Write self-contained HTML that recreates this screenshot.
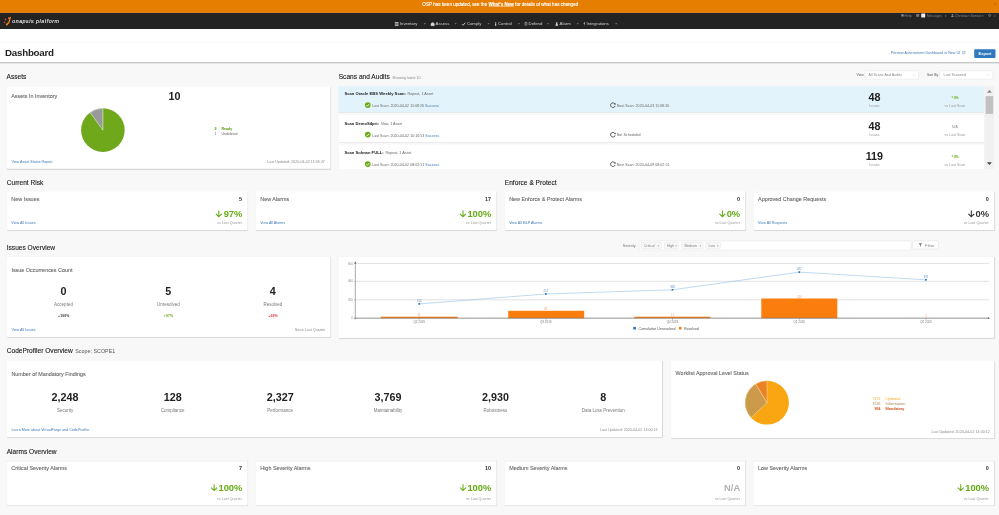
<!DOCTYPE html>
<html lang="en">
<head>
<meta charset="utf-8">
<title>Dashboard</title>
<style>
html,body{margin:0;padding:0;overflow:hidden;}
html{width:999px;height:515px;}
body{width:999px;height:515px;overflow:hidden;background:#f8f8f8;font-family:"Liberation Sans",sans-serif;color:#333;position:relative;}
.a{position:absolute;}
.t{position:absolute;white-space:nowrap;line-height:1;}
.card{position:absolute;background:#fff;box-shadow:0.3px 0.45px 0.9px rgba(0,0,0,.13);border-radius:1px;}
svg{overflow:visible;}
#sc{position:absolute;left:0;top:0;width:9990px;height:5150px;transform:scale(0.1);transform-origin:0 0;}
#zm{position:relative;width:999px;height:515px;zoom:10;will-change:opacity;}
</style>
</head>
<body>
<div id="sc"><div id="zm">
<div class="a" style="left:0px;top:0px;width:999px;height:12.9px;background:rgba(230,126,0,0.996);"></div>
<div class="t" style="left:400.30px;width:200.00px;text-align:center;top:2.24px;font-size:4.56px;color:#fff;-webkit-text-stroke:0.12px #fff;">OSP has been updated, see the <b><u>What's New</u></b> for details of what has changed</div>
<div class="t" style="left:993.6px;top:1.71px;font-size:4.6px;color:#a85c00;">×</div>
<div class="a" style="left:0px;top:12.9px;width:999px;height:16.2px;background:rgba(34,34,34,0.996);"></div>
<svg class="a" style="left:3.2px;top:16.2px;" width="9" height="10" viewBox="0 0 9 10"><circle cx="5.6" cy="2" r="0.9" fill="#f26a21"/><circle cx="2.3" cy="3.2" r="0.8" fill="#e8483a"/><circle cx="1.4" cy="6" r="0.8" fill="#e8483a"/><path d="M7.2 1.2 L5.6 6.4 L3.6 8.2" stroke="#f58220" stroke-width="1.3" fill="none" stroke-linecap="round"/><circle cx="3.6" cy="8.3" r="0.9" fill="#f58220"/></svg>
<div class="t" style="left:12.2px;top:18.21px;font-size:5.3px;color:#e4e4e4;font-style:italic;letter-spacing:0.52px;-webkit-text-stroke:0.12px #e4e4e4;">onapsis platform</div>
<svg class="a" style="left:394.8px;top:22.1px;" width="4.0" height="3.8" viewBox="0 0 4.4 4.2"><path d="M0 0.3H4.2V1.3H0Z M0 1.9H4.2V2.6H0Z M0 3.2H4.2V3.9H0Z" fill="#d8dae0"/></svg>
<div class="t" style="left:399.9px;top:21.59px;font-size:4.27px;color:#cdd0d8;">Inventory</div>
<svg class="a" style="left:423.8px;top:23.3px;" width="2" height="1.4" viewBox="0 0 2 1.4"><path d="M0 0H2L1 1.3Z" fill="#8b8e96"/></svg>
<svg class="a" style="left:430.8px;top:22.1px;" width="4.0" height="3.8" viewBox="0 0 4.4 4.2"><path d="M0.2 1.5H3.8V3.9H0.2Z M1.2 1.5V0.6H2.8V1.5" fill="#d8dae0" stroke="#d8dae0" stroke-width="0.5"/></svg>
<div class="t" style="left:435.6px;top:21.59px;font-size:4.27px;color:#cdd0d8;">Assess</div>
<svg class="a" style="left:454.6px;top:23.3px;" width="2" height="1.4" viewBox="0 0 2 1.4"><path d="M0 0H2L1 1.3Z" fill="#8b8e96"/></svg>
<svg class="a" style="left:461.8px;top:22.1px;" width="4.0" height="3.8" viewBox="0 0 4.4 4.2"><path d="M0.3 2.3L1.5 3.5L3.8 0.7" stroke="#d8dae0" stroke-width="0.9" fill="none"/></svg>
<div class="t" style="left:466.9px;top:21.59px;font-size:4.27px;color:#cdd0d8;">Comply</div>
<svg class="a" style="left:487.5px;top:23.3px;" width="2" height="1.4" viewBox="0 0 2 1.4"><path d="M0 0H2L1 1.3Z" fill="#8b8e96"/></svg>
<svg class="a" style="left:494.5px;top:22.1px;" width="4.0" height="3.8" viewBox="0 0 4.4 4.2"><path d="M0.6 3.9V2.6Q0.6 1.7 1.25 1.7Q1.9 1.7 1.9 2.6V3.9Z" fill="#d8dae0"/><circle cx="1.25" cy="1" r="0.7" fill="#d8dae0"/></svg>
<div class="t" style="left:498px;top:21.59px;font-size:4.27px;color:#cdd0d8;">Control</div>
<svg class="a" style="left:517.9px;top:23.3px;" width="2" height="1.4" viewBox="0 0 2 1.4"><path d="M0 0H2L1 1.3Z" fill="#8b8e96"/></svg>
<svg class="a" style="left:524.7px;top:22.1px;" width="4.0" height="3.8" viewBox="0 0 4.4 4.2"><path d="M0.3 0.3H2.3V2.6Q2.3 3.5 1.3 3.9Q0.3 3.5 0.3 2.6Z" fill="none" stroke="#d8dae0" stroke-width="0.6"/></svg>
<div class="t" style="left:528.6px;top:21.59px;font-size:4.27px;color:#cdd0d8;">Defend</div>
<svg class="a" style="left:547.1px;top:23.3px;" width="2" height="1.4" viewBox="0 0 2 1.4"><path d="M0 0H2L1 1.3Z" fill="#8b8e96"/></svg>
<svg class="a" style="left:555.3px;top:22.1px;" width="4.0" height="3.8" viewBox="0 0 4.4 4.2"><path d="M0.2 3.9V3.1Q0.2 2.1 1.6 2.1Q3 2.1 3 3.1V3.9Z" fill="#d8dae0"/><circle cx="1.6" cy="1.1" r="0.95" fill="#d8dae0"/></svg>
<div class="t" style="left:559.6px;top:21.59px;font-size:4.27px;color:#cdd0d8;">Alarm</div>
<svg class="a" style="left:576.7px;top:23.3px;" width="2" height="1.4" viewBox="0 0 2 1.4"><path d="M0 0H2L1 1.3Z" fill="#8b8e96"/></svg>
<svg class="a" style="left:583.3px;top:22.1px;" width="4.0" height="3.8" viewBox="0 0 4.4 4.2"><path d="M0.9 0.2L0.3 2.2H1.1L0.6 3.9L2 1.6H1.2L1.7 0.2Z" fill="#d8dae0"/></svg>
<div class="t" style="left:586.5px;top:21.59px;font-size:4.27px;color:#cdd0d8;">Integrations</div>
<svg class="a" style="left:615.2px;top:23.3px;" width="2" height="1.4" viewBox="0 0 2 1.4"><path d="M0 0H2L1 1.3Z" fill="#8b8e96"/></svg>
<svg class="a" style="left:901px;top:13.9px;" width="3" height="3" viewBox="0 0 3 3"><circle cx="1.5" cy="1.5" r="1.3" fill="#7f8492"/></svg>
<div class="t" style="left:904.6px;top:13.74px;font-size:3.5px;color:#7f8492;">Help</div>
<div class="a" style="left:916.2px;top:14px;width:3px;height:2.8px;background:rgba(119,119,119,0.996);"></div>
<div class="a" style="left:921.2px;top:13.4px;width:4px;height:4px;background:rgba(238,238,238,0.996);border-radius:0.6px;"></div>
<div class="t" style="left:927px;top:13.91px;font-size:3.3px;color:#7f8492;">Messages</div>
<div class="t" style="left:944.6px;top:14.50px;font-size:2.6px;color:#7f8492;">▾</div>
<svg class="a" style="left:951px;top:13.8px;" width="3" height="3.2" viewBox="0 0 3 3.2"><circle cx="1.5" cy="0.9" r="0.8" fill="#7f8492"/><path d="M0.2 3.2V2.6Q0.2 1.8 1.5 1.8Q2.8 1.8 2.8 2.6V3.2Z" fill="#7f8492"/></svg>
<div class="t" style="left:954.8px;top:13.55px;font-size:3.72px;color:#7f8492;">Christian Senior</div>
<div class="t" style="left:982.4px;top:14.50px;font-size:2.6px;color:#7f8492;">▾</div>
<svg class="a" style="left:988.2px;top:13.9px;" width="3" height="3" viewBox="0 0 3 3"><circle cx="1.5" cy="1.5" r="1" fill="none" stroke="#7f8492" stroke-width="0.8"/></svg>
<div class="t" style="left:993.6px;top:14.50px;font-size:2.6px;color:#7f8492;">▾</div>
<div class="a" style="left:0px;top:29.1px;width:999px;height:33.2px;background:rgba(255,255,255,0.996);"></div>
<div class="a" style="left:0px;top:42.6px;width:999px;height:0.5px;background:rgba(244,244,244,0.996);"></div>
<div class="a" style="left:0px;top:62.2px;width:999px;height:1.1px;background:rgba(188,188,188,0.996);"></div>
<div class="t" style="left:5px;top:47.60px;font-size:9.8px;color:#222;font-weight:bold;letter-spacing:-0.27px;">Dashboard</div>
<div class="t" style="right:38.90px;top:50.91px;font-size:3.65px;color:#3d7ab8;">Preview Assessment Dashboard in New UI</div>
<svg class="a" style="left:962.2px;top:51.1px;" width="3.2" height="3.2" viewBox="0 0 3.2 3.2"><path d="M1.4 0.6H0.4V2.8H2.6V1.8 M1.8 0.3H2.9V1.4 M2.9 0.3L1.5 1.7" stroke="#3d7ab8" stroke-width="0.4" fill="none"/></svg>
<div class="a" style="left:974.2px;top:49.2px;width:21.3px;height:8.9px;background:rgba(47,120,189,0.996);border-radius:1px;"></div>
<div class="t" style="left:971.30px;width:27.20px;text-align:center;top:51.67px;font-size:4.05px;color:#fff;font-weight:bold;">Export</div>
<div class="t" style="left:6.6px;top:73.11px;font-size:6.6px;color:#222;-webkit-text-stroke:0.12px #222;">Assets</div>
<div class="card" style="left:7.1px;top:86.6px;width:323.2px;height:82px;background:rgba(255,255,255,0.996);"></div>
<div class="t" style="left:11.2px;top:93.11px;font-size:5.42px;color:#626262;-webkit-text-stroke:0.08px #626262;">Assets In Inventory</div>
<div class="t" style="left:74.40px;width:200.00px;text-align:center;top:90.56px;font-size:10.8px;color:#222;font-weight:bold;">10</div>
<svg class="a" style="left:80.85px;top:108.1px;" width="44" height="44" viewBox="-22 -22 44 44"><circle r="21.8" fill="#70a81c"/><path d="M0 0 L0 -21.8 A21.8 21.8 0 0 0 -12.81 -17.64 Z" fill="#999" stroke="#fff" stroke-width="0.5" stroke-linejoin="round"/></svg>
<div class="t" style="left:214.4px;top:126.75px;font-size:3.6px;color:#5e9a12;font-weight:bold;">9</div>
<div class="t" style="left:221.5px;top:126.75px;font-size:3.6px;color:#5e9a12;font-weight:bold;">Ready</div>
<div class="t" style="left:214.4px;top:131.64px;font-size:3.5px;color:#666;">1</div>
<div class="t" style="left:221.5px;top:131.64px;font-size:3.5px;color:#666;">Undefined</div>
<div class="t" style="left:11.4px;top:160.01px;font-size:3.65px;color:#3d7ab8;">View Asset Status Report</div>
<div class="t" style="right:674.30px;top:160.31px;font-size:3.65px;color:#8c8c8c;">Last Updated: 2020-04-02 11:58:47</div>
<div class="t" style="left:338.7px;top:73.21px;font-size:6.6px;color:#222;-webkit-text-stroke:0.12px #222;">Scans and Audits</div>
<div class="t" style="left:392.2px;top:75.75px;font-size:3.6px;color:#8c8c8c;">Showing latest 10</div>
<div class="t" style="left:856.5px;top:73.12px;font-size:3.4px;color:#555;">View</div>
<div class="a" style="left:864.7px;top:70.5px;width:54.2px;height:8.9px;background:rgba(255,255,255,0.996);border:0.5px solid #e0e0e0;border-radius:1.2px;box-sizing:border-box;"></div>
<div class="t" style="left:868.4px;top:72.91px;font-size:3.65px;color:#8a8a8a;">All Scans And Audits</div>
<svg class="a" style="left:912.5px;top:74.2px;" width="2.4" height="1.6" viewBox="0 0 2.4 1.6"><path d="M0.2 0.2L1.2 1.3L2.2 0.2" stroke="#bbb" stroke-width="0.4" fill="none"/></svg>
<div class="t" style="left:927px;top:73.12px;font-size:3.4px;color:#555;">Sort By</div>
<div class="a" style="left:939.4px;top:70.5px;width:53.8px;height:8.9px;background:rgba(255,255,255,0.996);border:0.5px solid #e0e0e0;border-radius:1.2px;box-sizing:border-box;"></div>
<div class="t" style="left:943.6px;top:72.91px;font-size:3.65px;color:#8a8a8a;">Last Scanned</div>
<svg class="a" style="left:987.2px;top:74.2px;" width="2.4" height="1.6" viewBox="0 0 2.4 1.6"><path d="M0.2 0.2L1.2 1.3L2.2 0.2" stroke="#bbb" stroke-width="0.4" fill="none"/></svg>
<div class="a" style="left:338.7px;top:86.3px;width:645.2px;height:26.0px;background:rgba(226,243,252,0.996);box-shadow:0.2px 0.4px 0.8px rgba(0,0,0,.10);"></div>
<div class="a" style="left:338.7px;top:114.9px;width:645.2px;height:27.1px;background:rgba(255,255,255,0.996);box-shadow:0.2px 0.4px 0.8px rgba(0,0,0,.10);"></div>
<div class="a" style="left:338.7px;top:144.7px;width:645.2px;height:24.4px;background:rgba(255,255,255,0.996);box-shadow:0.2px 0.4px 0.8px rgba(0,0,0,.10);"></div>
<div class="a" style="left:336px;top:168.9px;width:660px;height:4px;background:rgba(248,248,248,0.996);"></div>
<div class="t" style="left:344.4px;top:91.79px;font-size:4.15px;color:#222;font-weight:bold;">Scan Oracle EBS Weekly Scan:</div>
<div class="t" style="left:407.59999999999997px;top:92.21px;font-size:3.65px;color:#666;">Repeat, 1 Asset</div>
<svg class="a" style="left:364.8px;top:102.10px;" width="6" height="6" viewBox="0 0 6 6"><circle cx="3" cy="3" r="2.85" fill="#6aaa16"/><path d="M1.6 3.1L2.6 4.1L4.4 2.1" stroke="#fff" stroke-width="0.9" fill="none"/></svg>
<div class="t" style="left:372.2px;top:104.01px;font-size:3.65px;color:#666;">Last Scan: 2020-04-02 11:08:26 <span style="color:#3d7ab8;">Success</span></div>
<svg class="a" style="left:609.9px;top:102.20px;" width="6" height="6" viewBox="0 0 6 6"><path d="M5.05 1.9A2.3 2.3 0 1 0 5.2 3.7" stroke="#4a4e52" stroke-width="1.0" fill="none"/><path d="M5.9 0.9L5.7 2.6L4.0 2.3Z" fill="#4a4e52"/></svg>
<div class="t" style="left:616.7px;top:103.81px;font-size:3.65px;color:#666;">Next Scan: 2020-04-03 11:08:20</div>
<div class="t" style="left:774.40px;width:200.00px;text-align:center;top:91.66px;font-size:10.8px;color:#222;font-weight:bold;">48</div>
<div class="t" style="left:774.40px;width:200.00px;text-align:center;top:103.65px;font-size:3.6px;color:#999;">Issues</div>
<div class="t" style="left:911.30px;width:87.20px;text-align:center;top:95.74px;font-size:3.5px;color:#64ab14;font-weight:bold;"><span style="font-size:2.6px;vertical-align:0.3px;">▼</span>0%</div>
<div class="t" style="left:911.30px;width:87.20px;text-align:center;top:103.61px;font-size:3.65px;color:#999;">vs Last Scan</div>
<div class="t" style="left:344.4px;top:121.29px;font-size:4.15px;color:#222;font-weight:bold;">Scan DemoS4prt:</div>
<div class="t" style="left:381.1px;top:121.71px;font-size:3.65px;color:#666;">Now, 1 Asset</div>
<svg class="a" style="left:364.8px;top:131.60px;" width="6" height="6" viewBox="0 0 6 6"><circle cx="3" cy="3" r="2.85" fill="#6aaa16"/><path d="M1.6 3.1L2.6 4.1L4.4 2.1" stroke="#fff" stroke-width="0.9" fill="none"/></svg>
<div class="t" style="left:372.2px;top:133.51px;font-size:3.65px;color:#666;">Last Scan: 2020-04-02 10:16:53 <span style="color:#3d7ab8;">Success</span></div>
<svg class="a" style="left:609.9px;top:131.70px;" width="6" height="6" viewBox="0 0 6 6"><path d="M5.05 1.9A2.3 2.3 0 1 0 5.2 3.7" stroke="#4a4e52" stroke-width="1.0" fill="none"/><path d="M5.9 0.9L5.7 2.6L4.0 2.3Z" fill="#4a4e52"/></svg>
<div class="t" style="left:616.7px;top:133.31px;font-size:3.65px;color:#666;">Not Scheduled</div>
<div class="t" style="left:774.40px;width:200.00px;text-align:center;top:121.16px;font-size:10.8px;color:#222;font-weight:bold;">48</div>
<div class="t" style="left:774.40px;width:200.00px;text-align:center;top:133.15px;font-size:3.6px;color:#999;">Issues</div>
<div class="t" style="left:911.30px;width:87.20px;text-align:center;top:125.24px;font-size:3.5px;color:#888;">N/A</div>
<div class="t" style="left:911.30px;width:87.20px;text-align:center;top:133.11px;font-size:3.65px;color:#999;">vs Last Scan</div>
<div class="t" style="left:344.4px;top:150.79px;font-size:4.15px;color:#222;font-weight:bold;">Scan Solman FULL:</div>
<div class="t" style="left:385.5px;top:151.21px;font-size:3.65px;color:#666;">Repeat, 1 Asset</div>
<svg class="a" style="left:364.8px;top:161.10px;" width="6" height="6" viewBox="0 0 6 6"><circle cx="3" cy="3" r="2.85" fill="#6aaa16"/><path d="M1.6 3.1L2.6 4.1L4.4 2.1" stroke="#fff" stroke-width="0.9" fill="none"/></svg>
<div class="t" style="left:372.2px;top:163.01px;font-size:3.65px;color:#666;">Last Scan: 2020-04-02 08:02:51 <span style="color:#3d7ab8;">Success</span></div>
<svg class="a" style="left:609.9px;top:161.20px;" width="6" height="6" viewBox="0 0 6 6"><path d="M5.05 1.9A2.3 2.3 0 1 0 5.2 3.7" stroke="#4a4e52" stroke-width="1.0" fill="none"/><path d="M5.9 0.9L5.7 2.6L4.0 2.3Z" fill="#4a4e52"/></svg>
<div class="t" style="left:616.7px;top:162.81px;font-size:3.65px;color:#666;">Next Scan: 2020-04-09 08:02:51</div>
<div class="t" style="left:774.40px;width:200.00px;text-align:center;top:150.66px;font-size:10.8px;color:#222;font-weight:bold;">119</div>
<div class="t" style="left:774.40px;width:200.00px;text-align:center;top:162.65px;font-size:3.6px;color:#999;">Issues</div>
<div class="t" style="left:911.30px;width:87.20px;text-align:center;top:154.74px;font-size:3.5px;color:#64ab14;font-weight:bold;"><span style="font-size:2.6px;vertical-align:0.3px;">▼</span>0%</div>
<div class="t" style="left:911.30px;width:87.20px;text-align:center;top:162.61px;font-size:3.65px;color:#999;">vs Last Scan</div>
<div class="a" style="left:984.6px;top:86.3px;width:9.4px;height:82.6px;background:rgba(241,241,241,0.996);"></div>
<div class="a" style="left:985.6px;top:96.1px;width:7.6px;height:17.8px;background:rgba(193,193,193,0.996);"></div>
<svg class="a" style="left:986.9px;top:89.8px;" width="5" height="3" viewBox="0 0 5 3"><path d="M0 3L2.5 0.2L5 3Z" fill="#888"/></svg>
<svg class="a" style="left:986.9px;top:162.2px;" width="5" height="3" viewBox="0 0 5 3"><path d="M0 0L2.5 2.8L5 0Z" fill="#444"/></svg>
<div class="t" style="left:6.7px;top:179.16px;font-size:6.6px;color:#222;-webkit-text-stroke:0.12px #222;">Current Risk</div>
<div class="t" style="left:504.8px;top:179.16px;font-size:6.6px;color:#222;-webkit-text-stroke:0.12px #222;">Enforce &amp; Protect</div>
<div class="card" style="left:7.15px;top:191.6px;width:240.2px;height:38.3px;background:rgba(255,255,255,0.996);"></div>
<div class="t" style="left:11.350000000000001px;top:196.71px;font-size:5.42px;color:#626262;-webkit-text-stroke:0.08px #626262;">New Issues</div>
<div class="t" style="right:756.85px;top:196.68px;font-size:5.46px;color:#333;font-weight:bold;">5</div>
<div class="t" style="right:756.65px;top:208.94px;font-size:9.4px;color:#64ab14;font-weight:bold;letter-spacing:-0.05px;">97%</div>
<svg class="a" style="left:215.35px;top:210.30px;" width="6.8" height="6.9" viewBox="0 0 6.8 6.9"><path d="M3.4 0.1V6.2 M0.45 3.5L3.4 6.4L6.35 3.5" stroke="#64ab14" stroke-width="1.05" fill="none"/></svg>
<div class="t" style="right:756.95px;top:220.71px;font-size:3.65px;color:#999;">vs Last Quarter</div>
<div class="t" style="left:11.350000000000001px;top:220.71px;font-size:3.65px;color:#3d7ab8;">View All Issues</div>
<div class="card" style="left:256.05px;top:191.6px;width:240.2px;height:38.3px;background:rgba(255,255,255,0.996);"></div>
<div class="t" style="left:260.25px;top:196.71px;font-size:5.42px;color:#626262;-webkit-text-stroke:0.08px #626262;">New Alarms</div>
<div class="t" style="right:507.95px;top:196.68px;font-size:5.46px;color:#333;font-weight:bold;">17</div>
<div class="t" style="right:507.75px;top:208.94px;font-size:9.4px;color:#64ab14;font-weight:bold;letter-spacing:-0.05px;">100%</div>
<svg class="a" style="left:459.55px;top:210.30px;" width="6.8" height="6.9" viewBox="0 0 6.8 6.9"><path d="M3.4 0.1V6.2 M0.45 3.5L3.4 6.4L6.35 3.5" stroke="#64ab14" stroke-width="1.05" fill="none"/></svg>
<div class="t" style="right:508.05px;top:220.71px;font-size:3.65px;color:#999;">vs Last Quarter</div>
<div class="t" style="left:260.25px;top:220.71px;font-size:3.65px;color:#3d7ab8;">View All Alarms</div>
<div class="card" style="left:504.95px;top:191.6px;width:240.2px;height:38.3px;background:rgba(255,255,255,0.996);"></div>
<div class="t" style="left:509.15px;top:196.71px;font-size:5.42px;color:#626262;-webkit-text-stroke:0.08px #626262;">New Enforce &amp; Protect Alarms</div>
<div class="t" style="right:259.05px;top:196.68px;font-size:5.46px;color:#333;font-weight:bold;">0</div>
<div class="t" style="right:258.85px;top:208.94px;font-size:9.4px;color:#64ab14;font-weight:bold;letter-spacing:-0.05px;">0%</div>
<svg class="a" style="left:718.95px;top:210.30px;" width="6.8" height="6.9" viewBox="0 0 6.8 6.9"><path d="M3.4 0.1V6.2 M0.45 3.5L3.4 6.4L6.35 3.5" stroke="#64ab14" stroke-width="1.05" fill="none"/></svg>
<div class="t" style="right:259.15px;top:220.71px;font-size:3.65px;color:#999;">vs Last Quarter</div>
<div class="t" style="left:509.15px;top:220.71px;font-size:3.65px;color:#3d7ab8;">View All E&amp;P Alarms</div>
<div class="card" style="left:753.85px;top:191.6px;width:240.2px;height:38.3px;background:rgba(255,255,255,0.996);"></div>
<div class="t" style="left:758.0500000000001px;top:196.71px;font-size:5.42px;color:#626262;-webkit-text-stroke:0.08px #626262;">Approved Change Requests</div>
<div class="t" style="right:10.15px;top:196.68px;font-size:5.46px;color:#333;font-weight:bold;">0</div>
<div class="t" style="right:9.95px;top:208.94px;font-size:9.4px;color:#333;font-weight:bold;letter-spacing:-0.05px;">0%</div>
<svg class="a" style="left:967.85px;top:210.30px;" width="6.8" height="6.9" viewBox="0 0 6.8 6.9"><path d="M3.4 0.1V6.2 M0.45 3.5L3.4 6.4L6.35 3.5" stroke="#333" stroke-width="1.05" fill="none"/></svg>
<div class="t" style="right:10.25px;top:220.71px;font-size:3.65px;color:#999;">vs Last Quarter</div>
<div class="t" style="left:758.0500000000001px;top:220.71px;font-size:3.65px;color:#3d7ab8;">View All Requests</div>
<div class="t" style="left:6.7px;top:448.21px;font-size:6.6px;color:#222;-webkit-text-stroke:0.12px #222;">Alarms Overview</div>
<div class="card" style="left:7.15px;top:461.5px;width:240.2px;height:43.7px;background:rgba(255,255,255,0.996);"></div>
<div class="t" style="left:11.350000000000001px;top:465.71px;font-size:5.42px;color:#626262;-webkit-text-stroke:0.08px #626262;">Critical Severity Alarms</div>
<div class="t" style="right:756.85px;top:465.68px;font-size:5.46px;color:#333;font-weight:bold;">7</div>
<div class="t" style="right:756.65px;top:482.84px;font-size:9.4px;color:#64ab14;font-weight:bold;letter-spacing:-0.05px;">100%</div>
<svg class="a" style="left:210.65px;top:484.20px;" width="6.8" height="6.9" viewBox="0 0 6.8 6.9"><path d="M3.4 0.1V6.2 M0.45 3.5L3.4 6.4L6.35 3.5" stroke="#64ab14" stroke-width="1.05" fill="none"/></svg>
<div class="t" style="right:756.95px;top:496.61px;font-size:3.65px;color:#999;">vs Last Quarter</div>
<div class="card" style="left:256.05px;top:461.5px;width:240.2px;height:43.7px;background:rgba(255,255,255,0.996);"></div>
<div class="t" style="left:260.25px;top:465.71px;font-size:5.42px;color:#626262;-webkit-text-stroke:0.08px #626262;">High Severity Alarms</div>
<div class="t" style="right:507.95px;top:465.68px;font-size:5.46px;color:#333;font-weight:bold;">10</div>
<div class="t" style="right:507.75px;top:482.84px;font-size:9.4px;color:#64ab14;font-weight:bold;letter-spacing:-0.05px;">100%</div>
<svg class="a" style="left:459.55px;top:484.20px;" width="6.8" height="6.9" viewBox="0 0 6.8 6.9"><path d="M3.4 0.1V6.2 M0.45 3.5L3.4 6.4L6.35 3.5" stroke="#64ab14" stroke-width="1.05" fill="none"/></svg>
<div class="t" style="right:508.05px;top:496.61px;font-size:3.65px;color:#999;">vs Last Quarter</div>
<div class="card" style="left:504.95px;top:461.5px;width:240.2px;height:43.7px;background:rgba(255,255,255,0.996);"></div>
<div class="t" style="left:509.15px;top:465.71px;font-size:5.42px;color:#626262;-webkit-text-stroke:0.08px #626262;">Medium Severity Alarms</div>
<div class="t" style="right:259.05px;top:465.68px;font-size:5.46px;color:#333;font-weight:bold;">0</div>
<div class="t" style="right:258.85px;top:482.84px;font-size:9.4px;color:#b0b0b0;font-weight:bold;letter-spacing:-0.05px;">N/A</div>
<div class="t" style="right:259.15px;top:496.61px;font-size:3.65px;color:#999;">vs Last Quarter</div>
<div class="card" style="left:753.85px;top:461.5px;width:240.2px;height:43.7px;background:rgba(255,255,255,0.996);"></div>
<div class="t" style="left:758.0500000000001px;top:465.71px;font-size:5.42px;color:#626262;-webkit-text-stroke:0.08px #626262;">Low Severity Alarms</div>
<div class="t" style="right:10.15px;top:465.68px;font-size:5.46px;color:#333;font-weight:bold;">0</div>
<div class="t" style="right:9.95px;top:482.84px;font-size:9.4px;color:#64ab14;font-weight:bold;letter-spacing:-0.05px;">100%</div>
<svg class="a" style="left:957.35px;top:484.20px;" width="6.8" height="6.9" viewBox="0 0 6.8 6.9"><path d="M3.4 0.1V6.2 M0.45 3.5L3.4 6.4L6.35 3.5" stroke="#64ab14" stroke-width="1.05" fill="none"/></svg>
<div class="t" style="right:10.25px;top:496.61px;font-size:3.65px;color:#999;">vs Last Quarter</div>
<div class="t" style="left:6.7px;top:244.11px;font-size:6.6px;color:#222;-webkit-text-stroke:0.12px #222;">Issues Overview</div>
<div class="card" style="left:7.1px;top:256.9px;width:323.2px;height:80.1px;background:rgba(255,255,255,0.996);"></div>
<div class="t" style="left:11.4px;top:266.91px;font-size:5.42px;color:#626262;-webkit-text-stroke:0.08px #626262;">Issue Occurrences Count</div>
<div class="t" style="left:0.00px;width:127.00px;text-align:center;top:285.66px;font-size:10.8px;color:#222;font-weight:bold;">0</div>
<div class="t" style="left:0.00px;width:127.00px;text-align:center;top:301.89px;font-size:4.5px;color:#777;">Accepted</div>
<div class="t" style="left:0.00px;width:127.00px;text-align:center;top:314.14px;font-size:3.5px;color:#333;font-weight:bold;"><span style="font-size:2.6px;vertical-align:0.3px;">▲</span>100%</div>
<div class="t" style="left:68.30px;width:200.00px;text-align:center;top:285.66px;font-size:10.8px;color:#222;font-weight:bold;">5</div>
<div class="t" style="left:68.30px;width:200.00px;text-align:center;top:301.89px;font-size:4.5px;color:#777;">Unresolved</div>
<div class="t" style="left:68.30px;width:200.00px;text-align:center;top:314.14px;font-size:3.5px;color:#64ab14;font-weight:bold;"><span style="font-size:2.6px;vertical-align:0.3px;">▼</span>97%</div>
<div class="t" style="left:172.80px;width:200.00px;text-align:center;top:285.66px;font-size:10.8px;color:#222;font-weight:bold;">4</div>
<div class="t" style="left:172.80px;width:200.00px;text-align:center;top:301.89px;font-size:4.5px;color:#777;">Resolved</div>
<div class="t" style="left:172.80px;width:200.00px;text-align:center;top:314.14px;font-size:3.5px;color:#e53030;font-weight:bold;"><span style="font-size:2.6px;vertical-align:0.3px;">▲</span>69%</div>
<div class="t" style="left:11.4px;top:327.71px;font-size:3.65px;color:#3d7ab8;">View All Issues</div>
<div class="t" style="right:673.80px;top:327.71px;font-size:3.65px;color:#8c8c8c;">Since Last Quarter</div>
<div class="t" style="left:622.8px;top:243.64px;font-size:3.5px;color:#777;">Severity:</div>
<div class="a" style="left:638.9px;top:240.7px;width:272.5px;height:9.6px;background:rgba(255,255,255,0.996);border:0.5px solid #e2e2e2;border-radius:1.2px;box-sizing:border-box;"></div>
<div class="a" style="left:641px;top:242.4px;width:20.4px;height:6.4px;background:rgba(248,248,248,0.996);border:0.4px solid #dedede;border-radius:0.9px;box-sizing:border-box;"></div>
<div class="t" style="left:643.9px;top:243.59px;font-size:3.55px;color:#808080;">Critical</div>
<div class="t" style="left:657.5px;top:243.81px;font-size:3.3px;color:#808080;">×</div>
<div class="a" style="left:664.1px;top:242.4px;width:14.8px;height:6.4px;background:rgba(248,248,248,0.996);border:0.4px solid #dedede;border-radius:0.9px;box-sizing:border-box;"></div>
<div class="t" style="left:667.0px;top:243.59px;font-size:3.55px;color:#808080;">High</div>
<div class="t" style="left:675.0px;top:243.81px;font-size:3.3px;color:#808080;">×</div>
<div class="a" style="left:681.5px;top:242.4px;width:21.8px;height:6.4px;background:rgba(248,248,248,0.996);border:0.4px solid #dedede;border-radius:0.9px;box-sizing:border-box;"></div>
<div class="t" style="left:684.4px;top:243.59px;font-size:3.55px;color:#808080;">Medium</div>
<div class="t" style="left:699.4px;top:243.81px;font-size:3.3px;color:#808080;">×</div>
<div class="a" style="left:705.6px;top:242.4px;width:15.0px;height:6.4px;background:rgba(248,248,248,0.996);border:0.4px solid #dedede;border-radius:0.9px;box-sizing:border-box;"></div>
<div class="t" style="left:708.5px;top:243.59px;font-size:3.55px;color:#808080;">Low</div>
<div class="t" style="left:716.7px;top:243.81px;font-size:3.3px;color:#808080;">×</div>
<div class="a" style="left:912.4px;top:240.5px;width:26.2px;height:8.8px;background:rgba(255,255,255,0.996);border:0.5px solid #dcdcdc;border-radius:1.4px;box-sizing:border-box;"></div>
<svg class="a" style="left:918.5px;top:243px;" width="3.8" height="4" viewBox="0 0 3.8 4"><path d="M0.1 0.2H3.7L2.3 1.9V3.8L1.5 3.3V1.9Z" fill="#777"/></svg>
<div class="t" style="left:925px;top:242.86px;font-size:4.3px;color:#888;">Filter</div>
<div class="card" style="left:338.7px;top:257.1px;width:655.3px;height:80.6px;background:rgba(255,255,255,0.996);"></div>
<svg class="a" style="left:338.7px;top:257.1px;" width="655.3" height="80.6" viewBox="338.7 257.1 655.3 80.6" font-family="Liberation Sans, sans-serif">
<g stroke="#d4d4d4" stroke-width="0.7"><line x1="355.3" y1="263.4" x2="989" y2="263.4"/><line x1="355.3" y1="281.3" x2="989" y2="281.3"/><line x1="355.3" y1="299.8" x2="989" y2="299.8"/></g>
<g stroke="#777" stroke-width="0.5"><line x1="354.2" y1="263.4" x2="355.3" y2="263.4"/><line x1="354.2" y1="281.3" x2="355.3" y2="281.3"/><line x1="354.2" y1="299.8" x2="355.3" y2="299.8"/></g>
<g fill="#fb7d0e"><rect x="380.8" y="316.7" width="76.8" height="1.5"/><rect x="508.2" y="310.8" width="76" height="7.4"/><rect x="634.3" y="316.7" width="76" height="1.5"/><rect x="761.3" y="298.5" width="76" height="19.7"/></g>
<line x1="353.8" y1="318.15" x2="989" y2="318.15" stroke="#6e6e6e" stroke-width="0.75"/>
<line x1="355.3" y1="262" x2="355.3" y2="319.4" stroke="#6e6e6e" stroke-width="0.6"/>
<g stroke="#6e6e6e" stroke-width="0.5"><line x1="419.2" y1="318.2" x2="419.2" y2="319.6"/><line x1="545.8" y1="318.2" x2="545.8" y2="319.6"/><line x1="672.5" y1="318.2" x2="672.5" y2="319.6"/><line x1="799.3" y1="318.2" x2="799.3" y2="319.6"/><line x1="925.9" y1="318.2" x2="925.9" y2="319.6"/></g>
<path d="M354.3 263.6L355.3 261.4L356.3 263.6Z" fill="#555"/><path d="M987.8 317.2L990 318.15L987.8 319.1Z" fill="#555"/>
<polyline points="419.2,303.9 545.8,294 672.5,289.8 799.3,272.1 925.9,279.8" fill="none" stroke="#9cc5e8" stroke-width="0.65"/>
<g fill="#2877b8"><rect x="418.35" y="303.05" width="1.7" height="1.7"/><rect x="544.95" y="293.15" width="1.7" height="1.7"/><rect x="671.65" y="288.95" width="1.7" height="1.7"/><rect x="798.45" y="271.25" width="1.7" height="1.7"/><rect x="925.05" y="278.95" width="1.7" height="1.7"/></g>
<g font-size="2.7" fill="#5a8fc0" text-anchor="middle"><text x="419.2" y="301.8">154</text><text x="545.8" y="291.9">257</text><text x="672.5" y="287.7">308</text><text x="799.3" y="270">492</text><text x="925.9" y="277.7">437</text></g>
<g font-size="2.7" fill="#f59a60" text-anchor="middle"><text x="419.2" y="315.8">11</text><text x="545.8" y="309.9">81</text><text x="672.5" y="315.8">11</text><text x="799.3" y="297.6">214</text><text x="925.9" y="316.8">4</text></g>
<g font-size="2.9" fill="#8a8a8a" text-anchor="end"><text x="352.8" y="264.5">600</text><text x="352.8" y="282.4">400</text><text x="352.8" y="300.9">200</text><text x="352.8" y="319.2">0</text></g>
<g font-size="3.0" fill="#777" text-anchor="middle"><text x="419.2" y="322.9">Q2 2019</text><text x="545.8" y="322.9">Q3 2019</text><text x="672.5" y="322.9">Q4 2019</text><text x="799.3" y="322.9">Q1 2020</text><text x="925.9" y="322.9">Q2 2020</text></g>
<rect x="633.3" y="326.9" width="2.6" height="2.6" fill="#2877b8"/><text x="638.4" y="329.6" font-size="3.6" fill="#555">Cumulative Unresolved</text>
<rect x="678.9" y="326.9" width="2.6" height="2.6" fill="#fb7d0e"/><text x="683.9" y="329.6" font-size="3.6" fill="#555">Resolved</text>
</svg>
<div class="t" style="left:6.7px;top:347.61px;font-size:6.6px;color:#222;-webkit-text-stroke:0.12px #222;">CodeProfiler Overview</div>
<div class="t" style="left:75.3px;top:348.66px;font-size:5.36px;color:#555;">Scope: SCOPE1</div>
<div class="card" style="left:7.1px;top:360.8px;width:654.9px;height:76.2px;background:rgba(255,255,255,0.996);"></div>
<div class="t" style="left:11.4px;top:370.91px;font-size:5.42px;color:#626262;-webkit-text-stroke:0.08px #626262;">Number of Mandatory Findings</div>
<div class="t" style="left:0.00px;width:130.20px;text-align:center;top:391.86px;font-size:10.8px;color:#222;font-weight:bold;">2,248</div>
<div class="t" style="left:0.00px;width:130.20px;text-align:center;top:407.89px;font-size:4.5px;color:#777;">Security</div>
<div class="t" style="left:72.70px;width:200.00px;text-align:center;top:391.86px;font-size:10.8px;color:#222;font-weight:bold;">128</div>
<div class="t" style="left:72.70px;width:200.00px;text-align:center;top:407.89px;font-size:4.5px;color:#777;">Compliance</div>
<div class="t" style="left:180.20px;width:200.00px;text-align:center;top:391.86px;font-size:10.8px;color:#222;font-weight:bold;">2,327</div>
<div class="t" style="left:180.20px;width:200.00px;text-align:center;top:407.89px;font-size:4.5px;color:#777;">Performance</div>
<div class="t" style="left:288.00px;width:200.00px;text-align:center;top:391.86px;font-size:10.8px;color:#222;font-weight:bold;">3,769</div>
<div class="t" style="left:288.00px;width:200.00px;text-align:center;top:407.89px;font-size:4.5px;color:#777;">Maintainability</div>
<div class="t" style="left:395.40px;width:200.00px;text-align:center;top:391.86px;font-size:10.8px;color:#222;font-weight:bold;">2,930</div>
<div class="t" style="left:395.40px;width:200.00px;text-align:center;top:407.89px;font-size:4.5px;color:#777;">Robustness</div>
<div class="t" style="left:503.20px;width:200.00px;text-align:center;top:391.86px;font-size:10.8px;color:#222;font-weight:bold;">8</div>
<div class="t" style="left:503.20px;width:200.00px;text-align:center;top:407.89px;font-size:4.5px;color:#777;">Data Loss Prevention</div>
<div class="t" style="left:11.4px;top:428.11px;font-size:3.65px;color:#3d7ab8;">Learn More about VirtualForge and CodeProfiler</div>
<div class="t" style="right:341.40px;top:428.11px;font-size:3.65px;color:#8c8c8c;">Last Updated: 2020-04-02 14:00:13</div>
<div class="card" style="left:671.2px;top:360.6px;width:322.9px;height:77.3px;background:rgba(255,255,255,0.996);"></div>
<div class="t" style="left:675.6px;top:370.31px;font-size:5.42px;color:#626262;-webkit-text-stroke:0.08px #626262;">Worklist Approval Level Status</div>
<svg class="a" style="left:745px;top:380.7px;" width="44" height="44" viewBox="-22 -22 44 44"><circle r="21.9" fill="#f9a612"/><path d="M0 0L-15.94 15.02A21.9 21.9 0 0 1 -11.28 -18.77Z" fill="#cb9b4b" stroke="#fbe8c8" stroke-width="0.45" stroke-linejoin="round"/><path d="M0 0L-11.28 -18.77A21.9 21.9 0 0 1 -0.00 -21.90Z" fill="#ea8223" stroke="#fbe8c8" stroke-width="0.45" stroke-linejoin="round"/></svg>
<div class="t" style="right:118.60px;top:396.74px;font-size:3.5px;color:#f5a623;">7172</div>
<div class="t" style="left:885.5px;top:396.31px;font-size:4.0px;color:#f5a623;">Optional</div>
<div class="t" style="right:118.60px;top:401.54px;font-size:3.5px;color:#a8895a;">3236</div>
<div class="t" style="left:885.5px;top:401.11px;font-size:4.0px;color:#a8895a;">Information</div>
<div class="t" style="right:118.60px;top:406.59px;font-size:3.55px;color:#d4501c;-webkit-text-stroke:0.1px #d4501c;">984</div>
<div class="t" style="left:885.5px;top:406.26px;font-size:3.95px;color:#d4501c;-webkit-text-stroke:0.1px #d4501c;">Mandatory</div>
<div class="t" style="right:9.10px;top:429.37px;font-size:3.7px;color:#8c8c8c;">Last Updated: 2020-04-02 14:00:12</div>
</div></div>
</body>
</html>
